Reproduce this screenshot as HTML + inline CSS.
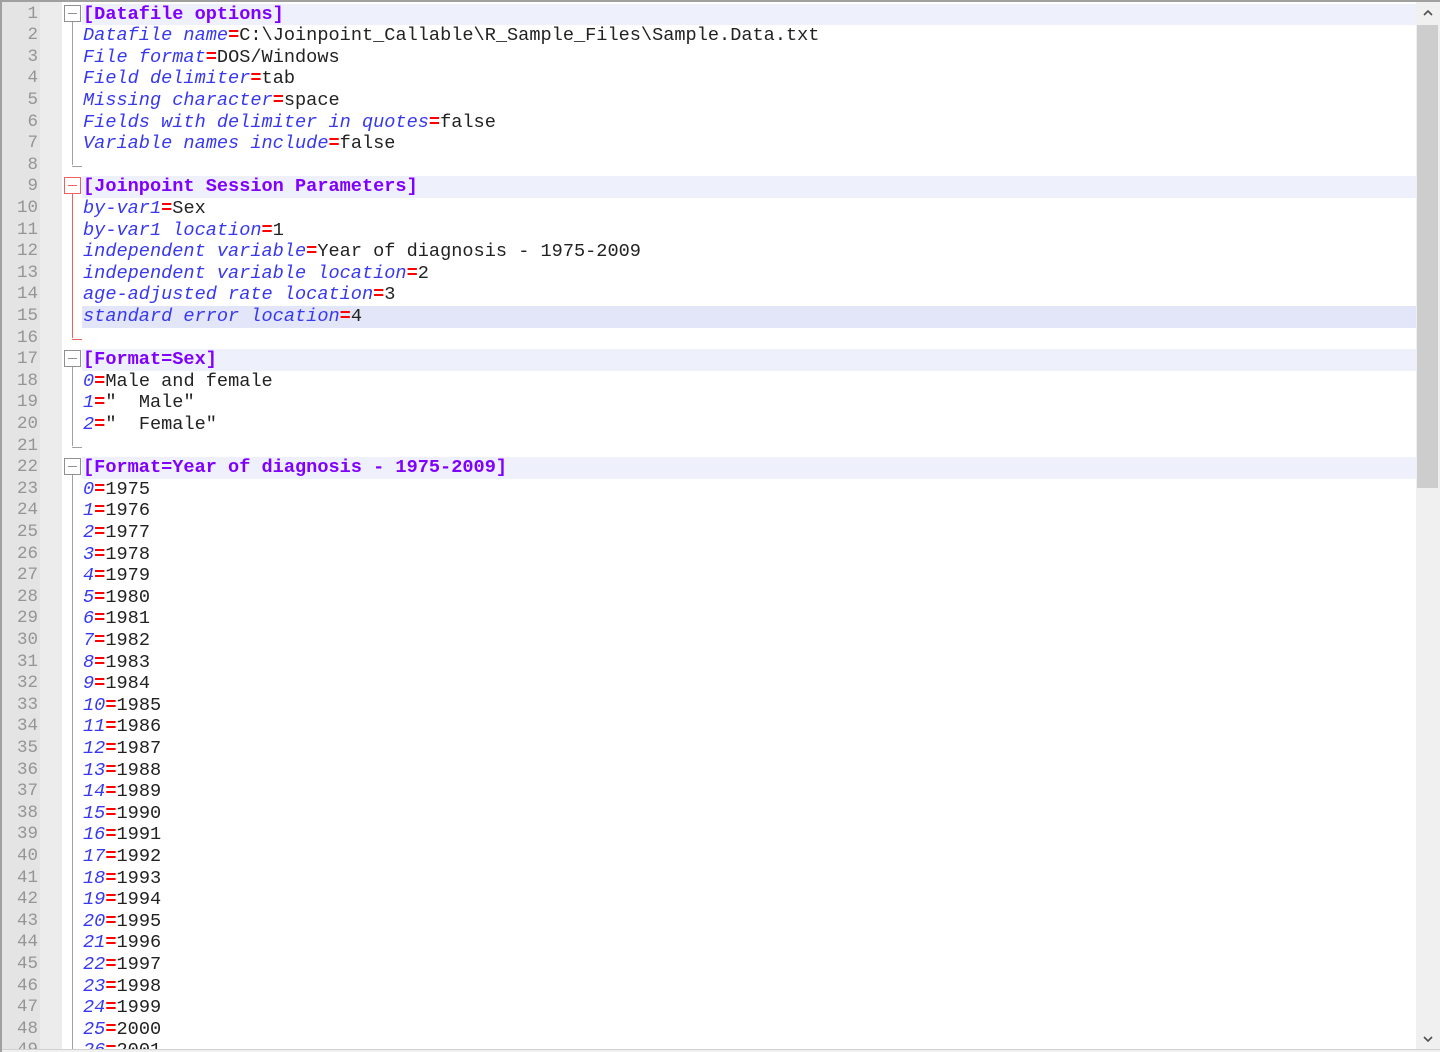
<!DOCTYPE html>
<html><head><meta charset="utf-8"><style>
*{margin:0;padding:0;box-sizing:border-box}
html,body{width:1440px;height:1052px;overflow:hidden;background:#fff}
body{position:relative;font-family:"Liberation Mono",monospace;font-size:18.6px}
#wrap{position:absolute;left:0;top:0;width:1440px;height:1052px;overflow:hidden}
#top{position:absolute;left:0;top:0;width:1440px;height:2px;background:#a0a0a0}
#lb{position:absolute;left:0;top:0;width:2px;height:1052px;background:#a0a0a0}
#gut{position:absolute;left:2px;top:2px;width:38px;height:1050px;background:#e4e4e4}
#gut2{position:absolute;left:40px;top:2px;width:22px;height:1050px;background:#ececec}
#bot{position:absolute;left:0;top:1049px;width:1440px;height:3px;background:#f0f0f0;border-top:1px solid #d0d0d0}
.row{position:absolute;left:0;height:21.6px;width:1416px;line-height:21.6px;white-space:pre}
.bg{position:absolute;left:82px;right:0;top:0;bottom:0}
.hl .bg{background:#eef0fc}
.cur .bg{background:#e2e6f8}
.n{position:absolute;left:2px;width:36px;text-align:right;color:#959595;font-size:17.5px}
.t{position:absolute;left:83px}
.k{color:#3838f0;font-style:italic}
.e{color:#ff0000;font-weight:bold}
.v{color:#222}
.h{color:#8000ff;font-weight:bold}
.box{position:absolute;left:64px;width:17px;height:17px;border:1px solid #909090;background:#fff}
.box::after{content:"";position:absolute;left:3px;right:3px;top:7px;height:1px;background:#909090}
.box.r{border-color:#f06060}.box.r::after{background:#f06060}
.vl{position:absolute;left:72px;width:1px;background:#a0a0a0}
.vl.r{background:#f06060}
.hk{position:absolute;left:72px;width:10px;height:1px;background:#a0a0a0}
.hk.r{background:#f06060}
#sb{position:absolute;left:1416px;top:2px;width:24px;height:1047px;background:#f0f0f0}
#th{position:absolute;left:1417px;top:25px;width:21px;height:463px;background:#cdcdcd}
.ar{position:absolute;left:1422px}
</style></head><body><div id="wrap">
<div id="gut"></div><div id="gut2"></div>
<div id="content"></div>
<div id="sb"></div><div id="th"></div>
<svg class="ar" style="top:9px" width="12" height="8"><path d="M2 6 L6 2 L10 6" stroke="#505050" stroke-width="1.6" fill="none"/></svg>
<svg class="ar" style="top:1035px" width="12" height="8"><path d="M2 2 L6 6 L10 2" stroke="#505050" stroke-width="1.6" fill="none"/></svg>
<div id="bot"></div>
<div id="top"></div><div id="lb"></div>
</div>
<script>
var L=[
['h','[Datafile options]'],
['kv','Datafile name','C:\\Joinpoint_Callable\\R_Sample_Files\\Sample.Data.txt'],
['kv','File format','DOS/Windows'],
['kv','Field delimiter','tab'],
['kv','Missing character','space'],
['kv','Fields with delimiter in quotes','false'],
['kv','Variable names include','false'],
['x',''],
['h','[Joinpoint Session Parameters]'],
['kv','by-var1','Sex'],
['kv','by-var1 location','1'],
['kv','independent variable','Year of diagnosis - 1975-2009'],
['kv','independent variable location','2'],
['kv','age-adjusted rate location','3'],
['kv','standard error location','4'],
['x',''],
['h','[Format=Sex]'],
['kv','0','Male and female'],
['kv','1','"  Male"'],
['kv','2','"  Female"'],
['x',''],
['h','[Format=Year of diagnosis - 1975-2009]']];
for(var i=0;i<=26;i++)L.push(['kv',''+i,''+(1975+i)]);
var c=document.getElementById('content'),h='';
function esc(s){return s.replace(/&/g,'&amp;').replace(/</g,'&lt;')}
var Y0=3.6;
for(var i=0;i<L.length;i++){
 var yy=Y0+i*21.6,l=L[i],cls='row';
 if(l[0]=='h')cls+=' hl';
 if(i==14)cls+=' cur';
 var t='';
 if(l[0]=='h')t='<span class="h">'+esc(l[1])+'</span>';
 else if(l[0]=='kv')t='<span class="k">'+esc(l[1])+'</span><span class="e">=</span><span class="v">'+esc(l[2])+'</span>';
 h+='<div class="'+cls+'" style="top:'+yy+'px"><div class="bg"></div><span class="n">'+(i+1)+'</span><span class="t">'+t+'</span></div>';
}
var sec=[[0,7,''],[8,15,'r'],[16,20,''],[21,60,'']];
sec.forEach(function(s){
 var y=Y0-1+s[0]*21.6+2;
 h+='<div class="vl '+s[2]+'" style="top:'+(y+17)+'px;height:'+((s[1]-s[0])*21.6-8)+'px"></div>';
 if(s[1]<60)h+='<div class="hk '+s[2]+'" style="top:'+(Y0-1+s[1]*21.6+12)+'px"></div>';
 h+='<div class="box '+s[2]+'" style="top:'+y+'px"></div>';
});
c.innerHTML=h;
</script>
</body></html>
